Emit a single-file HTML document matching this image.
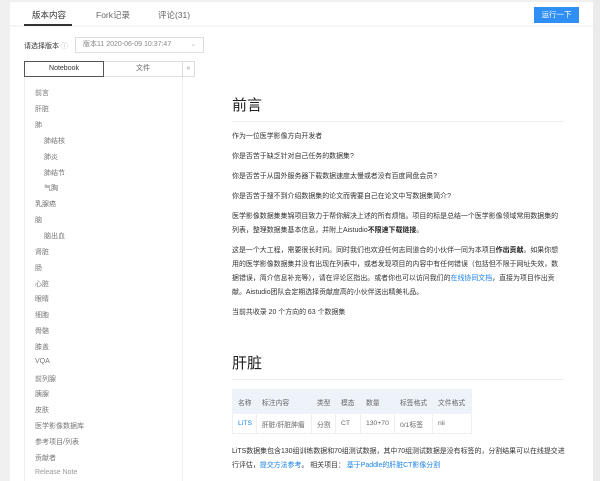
<!DOCTYPE html>
<html><head><meta charset="utf-8"><style>
*{margin:0;padding:0;box-sizing:border-box}
body{width:600px;height:481px;overflow:hidden;background:#f0f0f0;font-family:"Liberation Sans","Noto Sans CJK SC",sans-serif;color:#333;position:relative}
.a{position:absolute;white-space:nowrap}
#panel{position:absolute;left:10px;top:2px;width:583px;height:479px;background:#fff}
.tab{font-size:8.5px;color:#666;top:9px}
.nav{font-size:7px;color:#777;left:35px}
.nav.i{left:44px}
.p{font-size:6.95px;color:#333;left:232px;line-height:14px}
.b{font-weight:bold;color:#222}
.l{color:#1a82e8}
table{border-collapse:collapse;font-size:6.8px;color:#666;table-layout:fixed}
td{border:1px solid #eceff3;height:20px;padding:0 0 0 5px;white-space:nowrap;overflow:hidden}
tr.h td{background:#eef3fa;height:24px;border-color:#eef3fa}
</style></head><body>
<div id="panel"></div>
<div style="position:absolute;left:593px;top:0;width:7px;height:481px;background:#ebebeb"></div>
<div class="a" style="left:10px;top:25px;width:583px;height:2px;background:#f5f5f5"></div>
<div class="a tab" style="left:32px;color:#333">版本内容</div>
<div class="a" style="left:24px;top:24px;width:48px;height:2px;background:#333"></div>
<div class="a tab" style="left:96px">Fork记录</div>
<div class="a tab" style="left:158px">评论(31)</div>
<div class="a" style="left:534px;top:7px;width:45px;height:16px;background:#2f8ff5;color:#fff;font-size:7.5px;text-align:center;line-height:16px">运行一下</div>

<div class="a" style="left:24px;top:41px;font-size:7px;color:#333">请选择版本 <span style="color:#bbb">ⓘ</span></div>
<div class="a" style="left:75px;top:37px;width:129px;height:16px;border:1px solid #ddd;font-size:7px;color:#888;line-height:14px;padding-left:7px">版本11 2020-06-09 10:37:47<span style="position:absolute;right:7px;color:#bbb">⌄</span></div>

<div class="a" style="left:24px;top:61px;width:80px;height:16px;border:1px solid #555;font-size:7px;text-align:center;line-height:14px;color:#333">Notebook</div>
<div class="a" style="left:104px;top:61px;width:79px;height:16px;border:1px solid #ddd;border-left:none;font-size:7px;text-align:center;line-height:14px;color:#666">文件</div>
<div class="a" style="left:183px;top:61px;width:12px;height:16px;border:1px solid #ddd;border-left:none;font-size:7px;text-align:center;line-height:14px;color:#999">«</div>
<div class="a" style="left:24px;top:77px;width:159px;height:404px;border-left:1px solid #eee;border-right:1px solid #eee"></div>

<div class="a nav" style="top:88px">前言</div>
<div class="a nav" style="top:104px">肝脏</div>
<div class="a nav" style="top:120px">肺</div>
<div class="a nav i" style="top:136px">肺结核</div>
<div class="a nav i" style="top:152px">肺炎</div>
<div class="a nav i" style="top:168px">肺结节</div>
<div class="a nav i" style="top:183px">气胸</div>
<div class="a nav" style="top:199px">乳腺癌</div>
<div class="a nav" style="top:215px">脑</div>
<div class="a nav i" style="top:231px">脑出血</div>
<div class="a nav" style="top:247px">肾脏</div>
<div class="a nav" style="top:263px">肠</div>
<div class="a nav" style="top:279px">心脏</div>
<div class="a nav" style="top:294px">眼睛</div>
<div class="a nav" style="top:310px">细胞</div>
<div class="a nav" style="top:326px">骨骼</div>
<div class="a nav" style="top:342px">膝盖</div>
<div class="a nav" style="top:358px">VQA</div>
<div class="a nav" style="top:374px">前列腺</div>
<div class="a nav" style="top:389px">胰腺</div>
<div class="a nav" style="top:405px">皮肤</div>
<div class="a nav" style="top:421px">医学影像数据库</div>
<div class="a nav" style="top:437px">参考项目/列表</div>
<div class="a nav" style="top:453px">贡献者</div>
<div class="a nav" style="top:469px;color:#999">Release Note</div>

<div class="a" style="left:232px;top:94px;font-size:15px;color:#222">前言</div>
<div class="a" style="left:232px;top:121px;width:332px;height:1px;background:#eee"></div>
<div class="a p" style="top:130px">作为一位医学影像方向开发者</div>
<div class="a p" style="top:150px">你是否苦于缺乏针对自己任务的数据集?</div>
<div class="a p" style="top:170px">你是否苦于从国外服务器下载数据速度太慢或者没有百度网盘会员?</div>
<div class="a p" style="top:190px">你是否苦于搜不到介绍数据集的论文而需要自己在论文中写数据集简介?</div>
<div class="a p" style="top:210px">医学影像数据集集锦项目致力于帮你解决上述的所有烦恼。项目的标是总结一个医学影像领域常用数据集的<br>列表，整理数据集基本信息，并附上Aistudio<span class="b">不限速下载链接</span>。</div>
<div class="a p" style="top:244px">这是一个大工程，需要很长时间。同时我们也欢迎任何志同道合的小伙伴一同为本项目<span class="b">作出贡献</span>。如果你想<br>用的医学影像数据集并没有出现在列表中，或者发现项目的内容中有任何错误（包括但不限于网址失效，数<br>据错误，简介信息补充等），请在评论区指出。或者你也可以访问我们的<span class="l">在线协同文档</span>，直接为项目作出贡<br>献。Aistudio团队会定期选择贡献度高的小伙伴送出精美礼品。</div>
<div class="a p" style="top:306px">当前共收录 20 个方向的 63 个数据集</div>

<div class="a" style="left:232px;top:352px;font-size:15px;color:#222">肝脏</div>
<div class="a" style="left:232px;top:379px;width:332px;height:1px;background:#eee"></div>
<table class="a" style="left:232px;top:389px;width:239px">
<colgroup><col style="width:24px"><col style="width:55px"><col style="width:24px"><col style="width:25px"><col style="width:34px"><col style="width:38px"><col style="width:39px"></colgroup>
<tr class="h"><td>名称</td><td>标注内容</td><td>类型</td><td>模态</td><td>数量</td><td>标签格式</td><td>文件格式</td></tr>
<tr><td class="l">LiTS</td><td>肝脏/肝脏肿瘤</td><td>分割</td><td>CT</td><td>130+70</td><td>0/1标签</td><td>nii</td></tr>
</table>
<div class="a p" style="top:445px">LiTS数据集包含130组训练数据和70组测试数据，其中70组测试数据是没有标签的，分割结果可以在线提交进<br>行评估，<span class="l">提交方法参考</span>。 相关项目： <span class="l">基于Paddle的肝脏CT影像分割</span></div>
</body></html>
